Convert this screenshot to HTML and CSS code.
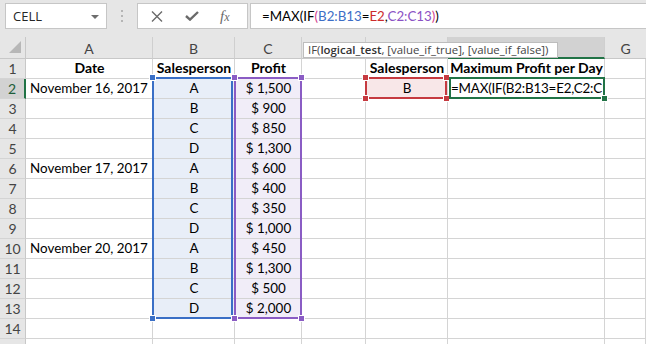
FILE: index.html
```html
<!DOCTYPE html>
<html>
<head>
<meta charset="utf-8">
<link rel="stylesheet" href="styles.css">
</head>
<body>
<div class="app">
  <div class="toolbar">
    <div class="namebox">
      <span class="nb-text">CELL</span>
      <svg class="nb-arrow" width="8" height="4" viewBox="0 0 8 4"><path d="M0 0H8L4 4Z" fill="#6d6d6d"/></svg>
    </div>
    <div class="sep">
      <svg width="2" height="12" viewBox="0 0 2 12"><rect x="0" y="0" width="2" height="2" fill="#b5b5b5"/><rect x="0" y="5" width="2" height="2" fill="#b5b5b5"/><rect x="0" y="10" width="2" height="2" fill="#b5b5b5"/></svg>
    </div>
    <div class="btns">
      <svg class="ico" width="12" height="11" viewBox="0 0 12 11"><path d="M1 0.5L11 10.5M11 0.5L1 10.5" stroke="#6a6a6a" stroke-width="1.4" fill="none"/></svg>
      <svg class="ico" width="14" height="10" viewBox="0 0 14 10"><path d="M1 5L5 8.6L13 1" stroke="#6a6a6a" stroke-width="2.4" fill="none"/></svg>
      <span class="fx">f<span class="fx-x">x</span></span>
    </div>
    <div class="fbar">
      <span class="ftext">=MAX(IF<span class="pp">(</span><span class="cb">B2:B13</span>=<span class="cr">E2</span>,<span class="cp">C2:C13</span><span class="pp">)</span>)</span>
    </div>
  </div>

  <div class="sheet-wrap">
    <div class="sheet">
      <div class="corner"><svg width="12" height="12" viewBox="0 0 12 12"><path d="M12 0V12H0Z" fill="#b7b7b7"/></svg></div>
      <div class="ch">A</div><div class="ch">B</div><div class="ch">C</div><div class="ch">D</div><div class="ch">E</div><div class="ch ch-act">F</div><div class="ch ch-last">G</div>

      <div class="rh">1</div><div class="c ctr b">Date</div><div class="c ctr b">Salesperson</div><div class="c ctr b">Profit</div><div class="c"></div><div class="c ctr b">Salesperson</div><div class="c ctr b">Maximum Profit per Day</div><div class="c"></div>
      <div class="rh rh-act">2</div><div class="c">November 16, 2017</div><div class="c ctr fb">A</div><div class="c ctr fp">$ 1,500</div><div class="c"></div><div class="c ctr fr">B</div><div class="c clip">=MAX(IF(B2:B13=E2,C2:C13))</div><div class="c"></div>
      <div class="rh">3</div><div class="c"></div><div class="c ctr fb">B</div><div class="c ctr fp">$ 900</div><div class="c"></div><div class="c"></div><div class="c"></div><div class="c"></div>
      <div class="rh">4</div><div class="c"></div><div class="c ctr fb">C</div><div class="c ctr fp">$ 850</div><div class="c"></div><div class="c"></div><div class="c"></div><div class="c"></div>
      <div class="rh">5</div><div class="c"></div><div class="c ctr fb">D</div><div class="c ctr fp">$ 1,300</div><div class="c"></div><div class="c"></div><div class="c"></div><div class="c"></div>
      <div class="rh">6</div><div class="c">November 17, 2017</div><div class="c ctr fb">A</div><div class="c ctr fp">$ 600</div><div class="c"></div><div class="c"></div><div class="c"></div><div class="c"></div>
      <div class="rh">7</div><div class="c"></div><div class="c ctr fb">B</div><div class="c ctr fp">$ 400</div><div class="c"></div><div class="c"></div><div class="c"></div><div class="c"></div>
      <div class="rh">8</div><div class="c"></div><div class="c ctr fb">C</div><div class="c ctr fp">$ 350</div><div class="c"></div><div class="c"></div><div class="c"></div><div class="c"></div>
      <div class="rh">9</div><div class="c"></div><div class="c ctr fb">D</div><div class="c ctr fp">$ 1,000</div><div class="c"></div><div class="c"></div><div class="c"></div><div class="c"></div>
      <div class="rh">10</div><div class="c">November 20, 2017</div><div class="c ctr fb">A</div><div class="c ctr fp">$ 450</div><div class="c"></div><div class="c"></div><div class="c"></div><div class="c"></div>
      <div class="rh">11</div><div class="c"></div><div class="c ctr fb">B</div><div class="c ctr fp">$ 1,300</div><div class="c"></div><div class="c"></div><div class="c"></div><div class="c"></div>
      <div class="rh">12</div><div class="c"></div><div class="c ctr fb">C</div><div class="c ctr fp">$ 500</div><div class="c"></div><div class="c"></div><div class="c"></div><div class="c"></div>
      <div class="rh">13</div><div class="c"></div><div class="c ctr fb">D</div><div class="c ctr fp">$ 2,000</div><div class="c"></div><div class="c"></div><div class="c"></div><div class="c"></div>
      <div class="rh">14</div><div class="c"></div><div class="c"></div><div class="c"></div><div class="c"></div><div class="c"></div><div class="c"></div><div class="c"></div>
      <div class="rh">15</div><div class="c"></div><div class="c"></div><div class="c"></div><div class="c"></div><div class="c"></div><div class="c"></div><div class="c"></div>
    </div>

    <div class="ranges">
      <div class="rng rng-blue"><i class="h tl"></i><i class="h bl"></i></div>
      <div class="rng rng-purple"><i class="h tl"></i><i class="h tr"></i><i class="h bl"></i><i class="h br"></i></div>
      <div class="rng rng-red"><i class="h tl"></i><i class="h tr"></i><i class="h bl"></i><i class="h br"></i></div>
      <div class="rng rng-green"><i class="h br"></i></div>
    </div>
  </div>

  <div class="tooltip">IF(<b>logical_test</b>, [value_if_true], [value_if_false])</div>
</div>
</body>
</html>
```

FILE: styles.css
```css
html, body {
  margin: 0;
  padding: 0;
  background: #e6e6e6;
  overflow: hidden;
}
.app {
  position: relative;
  width: 646px;
  height: 344px;
  overflow: hidden;
  font-family: Lato, "Liberation Sans", sans-serif;
}

/* ---------- toolbar ---------- */
.toolbar {
  display: flex;
  align-items: flex-start;
  height: 37px;
  padding-top: 3px;
  box-sizing: border-box;
}
.namebox {
  width: 102px;
  height: 26px;
  margin-left: 5px;
  box-sizing: border-box;
  background: #fff;
  border: 1px solid #c6c6c6;
  display: flex;
  align-items: center;
  justify-content: space-between;
  padding: 0 7px 0 7px;
  font-family: "Open Sans", sans-serif;
  font-size: 13px;
  color: #262626;
}
.nb-arrow { margin-top: 1px; }
.sep {
  width: 30px;
  height: 26px;
  display: flex;
  align-items: center;
  justify-content: center;
}
.btns {
  width: 111px;
  height: 26px;
  box-sizing: border-box;
  background: #fff;
  border: 1px solid #c6c6c6;
  display: flex;
  align-items: center;
  padding-left: 13px;
  gap: 22px;
}
.fx {
  font-family: "Liberation Serif", serif;
  font-style: italic;
  font-size: 15px;
  color: #6a6a6a;
  margin-left: -1px;
}
.fx-x { font-size: 12px; }
.fbar {
  flex: 1;
  height: 26px;
  margin-left: 2px;
  margin-right: -2px;
  box-sizing: border-box;
  background: #fff;
  border: 1px solid #c6c6c6;
  display: flex;
  align-items: center;
  padding-left: 11px;
  font-size: 13.3px;
  color: #000;
}
.cb { color: #3c6ec6; }
.cr { color: #cc2b2b; }
.cp { color: #8a52c4; }
.pp { color: #d3408f; }

/* ---------- sheet ---------- */
.sheet-wrap {
  position: relative;
}
.sheet, .ranges {
  display: grid;
  grid-template-columns: 26px 127px 82px 67px 64px 82px 157px 1fr;
  grid-template-rows: 22px repeat(15, 20px);
}
.sheet { background: #fff; }
.ranges {
  position: absolute;
  inset: 0;
  pointer-events: none;
}
.corner, .ch, .rh {
  background: #e6e6e6;
  color: #444;
  box-sizing: border-box;
  font-size: 14px;
}
.corner {
  border-right: 1px solid #c8c8c8;
  border-bottom: 1px solid #c8c8c8;
  display: flex;
  align-items: flex-end;
  justify-content: flex-end;
  padding: 0 4px 5px 0;
}
.ch {
  border-right: 1px solid #cfcfcf;
  border-bottom: 1px solid #c8c8c8;
  display: flex;
  align-items: center;
  justify-content: center;
  padding-top: 1px;
}
.ch-act {
  background: #d2d2d2;
  border-bottom: 2px solid #217346;
  color: #1e5e3a;
}
.ch-last { border-right: none; }
.rh {
  border-right: 1px solid #c8c8c8;
  border-bottom: 1px solid #d4d4d4;
  display: flex;
  align-items: center;
  justify-content: center;
}
.rh-act {
  background: #d2d2d2;
  border-right: 2px solid #217346;
  color: #1e5e3a;
}
.c {
  box-sizing: border-box;
  border-right: 1px solid #d4d4d4;
  border-bottom: 1px solid #d4d4d4;
  font-size: 13.4px;
  color: #000;
  display: flex;
  align-items: flex-end;
  padding: 0 3px 1px 4px;
  white-space: nowrap;
  overflow: hidden;
  line-height: 18px;
}
.ctr { justify-content: center; }
.b { font-weight: bold; font-size: 14px; }
.clip { padding-left: 3px; padding-right: 0; letter-spacing: -0.2px; }
.fb { background: #e8eef8; }
.fp { background: #f1edf8; }
.fr { background: #f8e7e8; }

.rng {
  position: relative;
  box-sizing: border-box;
  border: 2px solid;
}
.rng-blue {
  grid-column: 3 / 4;
  grid-row: 3 / 15;
  border-color: #3a6fc6;
  margin: -2px 2px 0 -1px;
}
.rng-purple {
  grid-column: 4 / 5;
  grid-row: 3 / 15;
  border-color: #8a5cc4;
  margin: -2px 0 0 -1px;
}
.rng-red {
  grid-column: 6 / 7;
  grid-row: 3 / 4;
  border-color: #c63a40;
  margin: -2px 1px 0 -1px;
}
.rng-green {
  grid-column: 7 / 8;
  grid-row: 3 / 4;
  border-color: #217346;
  margin: -2px 0 0 1px;
}
.h {
  position: absolute;
  width: 5px;
  height: 5px;
  border: 1px solid #fff;
}
.rng-blue .h { background: #3a6fc6; }
.rng-purple .h { background: #8a5cc4; }
.rng-red .h { background: #c63a40; }
.rng-green .h { background: #217346; }
.tl { left: -5px; top: -5px; }
.tr { right: -5px; top: -5px; }
.bl { left: -5px; bottom: -5px; }
.br { right: -5px; bottom: -5px; }

/* ---------- tooltip ---------- */
.tooltip {
  position: absolute;
  left: 303px;
  top: 42px;
  width: 255px;
  height: 16px;
  box-sizing: border-box;
  background: #fff;
  border: 1px solid #bdbdbd;
  font-family: "Open Sans", sans-serif;
  font-size: 11.4px;
  line-height: 14px;
  color: #444;
  padding-left: 4px;
  white-space: nowrap;
  overflow: hidden;
}
.tooltip b { font-weight: 600; color: #333; }
```
